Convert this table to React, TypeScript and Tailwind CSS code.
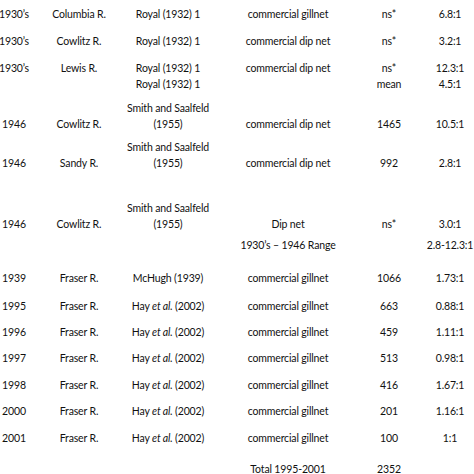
import type { ReactNode } from 'react';

type Row = {
  h: string;
  cells: ReactNode[];
};

const hay = (
  <span>
    Hay <span className="italic">et al.</span> (2002)
  </span>
);

const smith = (
  <>
    <span>Smith and Saalfeld</span>
    <span>(1955)</span>
  </>
);

const rows: Row[] = [
  { h: 'h-[22px]', cells: ['1930’s', 'Columbia R.', 'Royal (1932) 1', 'commercial gillnet', 'ns*', '6.8:1'] },
  { h: 'h-[27px]', cells: ['1930’s', 'Cowlitz R.', 'Royal (1932) 1', 'commercial dip net', 'ns*', '3.2:1'] },
  { h: 'h-[27px]', cells: ['1930’s', 'Lewis R.', 'Royal (1932) 1', 'commercial dip net', 'ns*', '12.3:1'] },
  { h: 'h-[15px]', cells: ['', '', 'Royal (1932) 1', '', 'mean', '4.5:1'] },
  { h: 'h-[41px]', cells: ['1946', 'Cowlitz R.', smith, 'commercial dip net', '1465', '10.5:1'] },
  { h: 'h-[39px]', cells: ['1946', 'Sandy R.', smith, 'commercial dip net', '992', '2.8:1'] },
  { h: 'h-[61px]', cells: ['1946', 'Cowlitz R.', smith, 'Dip net', 'ns*', '3.0:1'] },
  { h: 'h-[21px]', cells: ['', '', '', '1930’s – 1946 Range', '', '2.8-12.3:1'] },
  { h: 'h-[33px]', cells: ['1939', 'Fraser R.', 'McHugh (1939)', 'commercial gillnet', '1066', '1.73:1'] },
  { h: 'h-[28px]', cells: ['1995', 'Fraser R.', hay, 'commercial gillnet', '663', '0.88:1'] },
  { h: 'h-[26px]', cells: ['1996', 'Fraser R.', hay, 'commercial gillnet', '459', '1.11:1'] },
  { h: 'h-[26px]', cells: ['1997', 'Fraser R.', hay, 'commercial gillnet', '513', '0.98:1'] },
  { h: 'h-[27px]', cells: ['1998', 'Fraser R.', hay, 'commercial gillnet', '416', '1.67:1'] },
  { h: 'h-[26px]', cells: ['2000', 'Fraser R.', hay, 'commercial gillnet', '201', '1.16:1'] },
  { h: 'h-[27px]', cells: ['2001', 'Fraser R.', hay, 'commercial gillnet', '100', '1:1'] },
  { h: 'h-[31px]', cells: ['', '', '', 'Total 1995-2001', '2352', ''] },
];

export default function App() {
  return (
    <div
      className="h-[474px] w-[474px] overflow-hidden bg-white text-[10.5px] leading-[16px] tracking-[-0.15px] text-[#111]"
      style={{ fontFamily: 'Lato, "Open Sans", sans-serif' }}
    >
      {rows.map((row, i) => (
        <div key={i} className={`grid grid-cols-[28px_102px_76px_164px_38px_84px] ${row.h}`}>
          {row.cells.map((cell, j) => (
            <div key={j} className="flex flex-col items-center justify-end whitespace-nowrap">
              {typeof cell === 'string' ? <span>{cell}</span> : cell}
            </div>
          ))}
        </div>
      ))}
    </div>
  );
}
